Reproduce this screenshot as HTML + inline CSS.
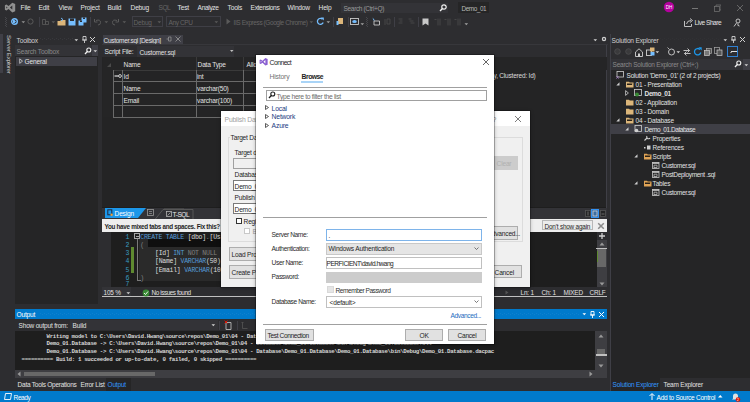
<!DOCTYPE html>
<html><head><meta charset="utf-8">
<style>
*{margin:0;padding:0;box-sizing:border-box}
html,body{width:750px;height:402px;overflow:hidden;background:#2d2d30;font-family:"Liberation Sans",sans-serif;font-size:6px;color:#f1f1f1;position:relative}
.a{position:absolute;display:block}
.t{position:absolute;white-space:pre;line-height:1}
</style></head><body>
<div class="a" style="left:0px;top:0px;width:750px;height:402px;background:#2d2d30;"></div>
<svg class="a" style="left:0px;top:0px;" width="20" height="15" viewBox="0 0 20 15"><path d="M12.3 2.7L15.2 4V11.2L12.3 12.4L8.6 8.9L6.4 10.4L4.9 9.7V5.3L6.4 4.6L8.6 6.1Z M12.3 5.4L9.9 7.5L12.3 9.6Z M6.3 6.4V8.6L7.6 7.5Z" fill="#909090" fill-rule="evenodd"/></svg>
<div class="t" style="left:20.60px;top:5.00px;font-size:6.6px;color:#e2e2e2;letter-spacing:-0.2px;">File</div>
<div class="t" style="left:38.60px;top:5.00px;font-size:6.6px;color:#e2e2e2;letter-spacing:-0.2px;">Edit</div>
<div class="t" style="left:58.60px;top:5.00px;font-size:6.6px;color:#e2e2e2;letter-spacing:-0.2px;">View</div>
<div class="t" style="left:80.60px;top:5.00px;font-size:6.6px;color:#e2e2e2;letter-spacing:-0.2px;">Project</div>
<div class="t" style="left:107.60px;top:5.00px;font-size:6.6px;color:#e2e2e2;letter-spacing:-0.2px;">Build</div>
<div class="t" style="left:130.60px;top:5.00px;font-size:6.6px;color:#e2e2e2;letter-spacing:-0.2px;">Debug</div>
<div class="t" style="left:177.60px;top:5.00px;font-size:6.6px;color:#e2e2e2;letter-spacing:-0.2px;">Test</div>
<div class="t" style="left:197.60px;top:5.00px;font-size:6.6px;color:#e2e2e2;letter-spacing:-0.35px;">Analyze</div>
<div class="t" style="left:227.60px;top:5.00px;font-size:6.6px;color:#e2e2e2;letter-spacing:-0.2px;">Tools</div>
<div class="t" style="left:250.60px;top:5.00px;font-size:6.6px;color:#e2e2e2;letter-spacing:-0.35px;">Extensions</div>
<div class="t" style="left:287.60px;top:5.00px;font-size:6.6px;color:#e2e2e2;letter-spacing:-0.2px;">Window</div>
<div class="t" style="left:318.60px;top:5.00px;font-size:6.6px;color:#e2e2e2;letter-spacing:-0.2px;">Help</div>
<div class="t" style="left:158.60px;top:5.00px;font-size:6.6px;color:#656565;letter-spacing:-0.5px;">SQL</div>
<div class="a" style="left:341px;top:3px;width:107px;height:10px;background:#333337;"></div>
<div class="t" style="left:343.60px;top:6.00px;font-size:6.6px;color:#999999;letter-spacing:-0.4px;">Search (Ctrl+Q)</div>
<svg class="a" style="left:439px;top:4px;" width="8" height="8" viewBox="0 0 8 8"><circle cx="5" cy="3" r="2.2" fill="none" stroke="#f1f1f1" stroke-width="1.2"/><path d="M3.5 4.5 L1 7" stroke="#f1f1f1" stroke-width="1.4"/></svg>
<div class="a" style="left:458px;top:2px;width:31px;height:11px;background:#252526;"></div>
<div class="t" style="left:461.60px;top:6.00px;font-size:6.4px;color:#b8b8b8;letter-spacing:-0.45px;">Demo_01</div>
<svg class="a" style="left:663px;top:1px;" width="12" height="12" viewBox="0 0 12 12"><circle cx="6" cy="6" r="5.2" fill="#b4009e"/><text x="6" y="7.9" font-size="4.6" text-anchor="middle" fill="#fff" font-family="Liberation Sans">DH</text></svg>
<div class="a" style="left:692px;top:8px;width:6px;height:1px;background:#767676;"></div>
<svg class="a" style="left:713px;top:4px;" width="8" height="8" viewBox="0 0 8 8"><rect x="1.5" y="2.5" width="5" height="5" fill="none" stroke="#767676" stroke-width="0.7"/><path d="M3 2.5V1h5v5H6.5" fill="none" stroke="#767676" stroke-width="0.7"/></svg>
<svg class="a" style="left:736px;top:4px;" width="8" height="8" viewBox="0 0 8 8"><path d="M1 1L7 7M7 1L1 7" stroke="#767676" stroke-width="0.8"/></svg>
<svg class="a" style="left:5px;top:17px;" width="3" height="10" viewBox="0 0 3 10"><rect x="0" y="0" width="1" height="1" fill="#46464a"/><rect x="1" y="1" width="1" height="1" fill="#46464a"/><rect x="0" y="2" width="1" height="1" fill="#46464a"/><rect x="1" y="3" width="1" height="1" fill="#46464a"/><rect x="0" y="4" width="1" height="1" fill="#46464a"/><rect x="1" y="5" width="1" height="1" fill="#46464a"/><rect x="0" y="6" width="1" height="1" fill="#46464a"/><rect x="1" y="7" width="1" height="1" fill="#46464a"/><rect x="0" y="8" width="1" height="1" fill="#46464a"/><rect x="1" y="9" width="1" height="1" fill="#46464a"/></svg>
<svg class="a" style="left:11px;top:18px;" width="7" height="7" viewBox="0 0 7 7"><circle cx="3.5" cy="3.5" r="2.8" fill="none" stroke="#75beff" stroke-width="1.4"/><path d="M2 2h1.5l1.5 1.5l-1.5 1.5H2Z" fill="#75beff"/></svg>
<svg class="a" style="left:21px;top:21px;" width="5" height="3" viewBox="0 0 5 3"><path d="M0.5 0.2h3.6l-1.8 2.1z" fill="#909090"/></svg>
<svg class="a" style="left:27px;top:18px;" width="7" height="7" viewBox="0 0 7 7"><circle cx="3.5" cy="3.5" r="2.6" fill="none" stroke="#5a5a5a" stroke-width="1"/></svg>
<div class="a" style="left:39px;top:17px;width:1px;height:10px;background:#3f3f46;"></div>
<svg class="a" style="left:42px;top:18px;" width="7" height="7" viewBox="0 0 7 7"><path d="M0.5 1.5h3v5h-3z M3.5 3.5h3v3h-3z" fill="none" stroke="#5a5a5a" stroke-width="0.8"/></svg>
<svg class="a" style="left:51px;top:21px;" width="5" height="3" viewBox="0 0 5 3"><path d="M0.5 0.2h3.6l-1.8 2.1z" fill="#5a5a5a"/></svg>
<svg class="a" style="left:57px;top:17px;" width="9" height="9" viewBox="0 0 9 9"><path d="M0.5 4h2.5l1-1h4.5v5.5h-8z" fill="#dcb67a"/><path d="M4 1l2 1.5l-2 1.5" fill="none" stroke="#75beff" stroke-width="0.9"/></svg>
<svg class="a" style="left:68px;top:18px;" width="8" height="8" viewBox="0 0 8 8"><path d="M0.5 0.5h7v7h-7z" fill="#75beff"/><rect x="2" y="0.5" width="4" height="2.5" fill="#2d2d30"/></svg>
<svg class="a" style="left:78px;top:17px;" width="9" height="9" viewBox="0 0 9 9"><path d="M3.5 0.5h5v5h-5z" fill="#75beff"/><rect x="5" y="0.5" width="2" height="1.5" fill="#2d2d30"/><path d="M0.5 3.5h5v5h-5z" fill="#75beff"/><rect x="2" y="3.5" width="2" height="1.5" fill="#2d2d30"/></svg>
<div class="a" style="left:90px;top:17px;width:1px;height:10px;background:#3f3f46;"></div>
<svg class="a" style="left:94px;top:18px;" width="8" height="8" viewBox="0 0 8 8"><path d="M2 2.5 Q6.5 1 6.5 4.5 Q6.5 7 4 7" fill="none" stroke="#5a5a5a" stroke-width="1"/><path d="M0.5 1v3h3" fill="none" stroke="#5a5a5a" stroke-width="1"/></svg>
<svg class="a" style="left:104px;top:21px;" width="5" height="3" viewBox="0 0 5 3"><path d="M0.5 0.2h3.6l-1.8 2.1z" fill="#5a5a5a"/></svg>
<svg class="a" style="left:111px;top:18px;" width="8" height="8" viewBox="0 0 8 8"><path d="M6 2.5 Q1.5 1 1.5 4.5 Q1.5 7 4 7" fill="none" stroke="#5a5a5a" stroke-width="1"/><path d="M7.5 1v3h-3" fill="none" stroke="#5a5a5a" stroke-width="1"/></svg>
<svg class="a" style="left:122px;top:21px;" width="5" height="3" viewBox="0 0 5 3"><path d="M0.5 0.2h3.6l-1.8 2.1z" fill="#5a5a5a"/></svg>
<div class="a" style="left:132px;top:16px;width:31px;height:11px;border:1px solid #3f3f46;background:transparent;"></div>
<div class="t" style="left:133.60px;top:20.00px;font-size:6.5px;color:#656565;letter-spacing:-0.2px;">Debug</div>
<svg class="a" style="left:157px;top:21px;" width="5" height="3" viewBox="0 0 5 3"><path d="M0.5 0.2h3.6l-1.8 2.1z" fill="#5a5a5a"/></svg>
<div class="a" style="left:166px;top:16px;width:55px;height:11px;border:1px solid #3f3f46;background:transparent;"></div>
<div class="t" style="left:168.60px;top:20.00px;font-size:6.5px;color:#656565;letter-spacing:-0.4px;">Any CPU</div>
<svg class="a" style="left:214px;top:21px;" width="5" height="3" viewBox="0 0 5 3"><path d="M0.5 0.2h3.6l-1.8 2.1z" fill="#5a5a5a"/></svg>
<svg class="a" style="left:226px;top:18px;" width="5" height="7" viewBox="0 0 5 7"><path d="M0.5 0.5L4.5 3.5L0.5 6.5Z" fill="#5a5a5a"/></svg>
<div class="t" style="left:233.60px;top:20.00px;font-size:6.5px;color:#656565;letter-spacing:-0.42px;">IIS Express (Google Chrome)</div>
<svg class="a" style="left:309px;top:21px;" width="5" height="3" viewBox="0 0 5 3"><path d="M0.5 0.2h3.6l-1.8 2.1z" fill="#5a5a5a"/></svg>
<svg class="a" style="left:316px;top:17px;" width="9" height="9" viewBox="0 0 9 9"><path d="M6.5 2.2 A3 3 0 1 0 7.2 5.5" fill="none" stroke="#75beff" stroke-width="1.3"/><path d="M4.8 0.5h3v3z" fill="#75beff"/></svg>
<svg class="a" style="left:326px;top:21px;" width="5" height="3" viewBox="0 0 5 3"><path d="M0.5 0.2h3.6l-1.8 2.1z" fill="#a0a0a0"/></svg>
<div class="a" style="left:333px;top:17px;width:1px;height:10px;background:#3f3f46;"></div>
<svg class="a" style="left:336px;top:17px;" width="9" height="9" viewBox="0 0 9 9"><path d="M2 1h5v6h-5z" fill="#dcb67a"/><path d="M0.5 4h2v4h-2z" fill="#75beff"/></svg>
<div class="a" style="left:348px;top:17px;width:1px;height:10px;background:#3f3f46;"></div>
<svg class="a" style="left:350px;top:18px;" width="9" height="8" viewBox="0 0 9 8"><rect x="0.5" y="0.5" width="8" height="6" fill="none" stroke="#c8c8c8" stroke-width="0.9"/><ellipse cx="4.5" cy="3.5" rx="2.3" ry="1.5" fill="#75beff"/></svg>
<svg class="a" style="left:360px;top:23px;" width="5" height="3" viewBox="0 0 5 3"><path d="M0.5 0.2h3.6l-1.8 2.1z" fill="#a0a0a0"/></svg>
<svg class="a" style="left:366px;top:17px;" width="3" height="10" viewBox="0 0 3 10"><rect x="0" y="0" width="1" height="1" fill="#46464a"/><rect x="1" y="1" width="1" height="1" fill="#46464a"/><rect x="0" y="2" width="1" height="1" fill="#46464a"/><rect x="1" y="3" width="1" height="1" fill="#46464a"/><rect x="0" y="4" width="1" height="1" fill="#46464a"/><rect x="1" y="5" width="1" height="1" fill="#46464a"/><rect x="0" y="6" width="1" height="1" fill="#46464a"/><rect x="1" y="7" width="1" height="1" fill="#46464a"/><rect x="0" y="8" width="1" height="1" fill="#46464a"/><rect x="1" y="9" width="1" height="1" fill="#46464a"/></svg>
<svg class="a" style="left:372px;top:17px;" width="8" height="9" viewBox="0 0 8 9"><path d="M0.5 0.5L3 3.5L1.5 3.5Z" fill="#75beff"/><path d="M2 4h5.5v4h-5.5z" fill="none" stroke="#c8c8c8" stroke-width="0.9"/></svg>
<svg class="a" style="left:384px;top:18px;" width="7" height="8" viewBox="0 0 7 8"><path d="M1 1v6M3 1h3v5h-3z" fill="none" stroke="#4a4a4a" stroke-width="0.9"/></svg>
<div class="a" style="left:394px;top:17px;width:1px;height:10px;background:#3f3f46;"></div>
<svg class="a" style="left:398px;top:18px;" width="6" height="7" viewBox="0 0 6 7"><path d="M0.5 1h4M1.5 3h3M0.5 5h4" stroke="#4a4a4a" stroke-width="0.9"/></svg>
<svg class="a" style="left:408px;top:18px;" width="7" height="7" viewBox="0 0 7 7"><path d="M0.5 1h3M1.5 3h4M2.5 5h4" stroke="#4a4a4a" stroke-width="0.9"/></svg>
<div class="a" style="left:418px;top:17px;width:1px;height:10px;background:#3f3f46;"></div>
<svg class="a" style="left:422px;top:18px;" width="7" height="8" viewBox="0 0 7 8"><path d="M0.5 0.5h6v7l-3-2l-3 2z" fill="#c8c8c8"/></svg>
<svg class="a" style="left:434px;top:18px;" width="7" height="8" viewBox="0 0 7 8"><path d="M0.5 1.5h2M4 0.5v7M6 0.5v7" stroke="#4a4a4a" stroke-width="0.9"/></svg>
<svg class="a" style="left:444px;top:18px;" width="7" height="8" viewBox="0 0 7 8"><path d="M0.5 1.5h2M4 0.5v7M6 0.5v7" stroke="#4a4a4a" stroke-width="0.9"/></svg>
<svg class="a" style="left:454px;top:18px;" width="7" height="8" viewBox="0 0 7 8"><path d="M0.5 1.5h2M4 0.5v7M6 0.5v7" stroke="#4a4a4a" stroke-width="0.9"/></svg>
<svg class="a" style="left:456px;top:18px;" width="7" height="8" viewBox="0 0 7 8"></svg>
<svg class="a" style="left:464px;top:23px;" width="5" height="3" viewBox="0 0 5 3"><path d="M0.5 0.2h3.6l-1.8 2.1z" fill="#a0a0a0"/></svg>
<svg class="a" style="left:684px;top:18px;" width="9" height="9" viewBox="0 0 9 9"><path d="M0.5 3v5.5h7V6" fill="none" stroke="#d0d0d0" stroke-width="0.9"/><path d="M2.5 6 Q3 2.5 7 2.5" fill="none" stroke="#d0d0d0" stroke-width="0.9"/><path d="M6 0.5L8.5 2.5L6 4.5" fill="none" stroke="#d0d0d0" stroke-width="0.9"/></svg>
<div class="t" style="left:694.60px;top:20.00px;font-size:6.6px;color:#e2e2e2;letter-spacing:-0.5px;">Live Share</div>
<svg class="a" style="left:733px;top:18px;" width="9" height="9" viewBox="0 0 9 9"><circle cx="5" cy="3" r="2" fill="none" stroke="#d0d0d0" stroke-width="0.9"/><path d="M1 8.5L3.5 5M5 5.5 Q4 8 6.5 8" fill="none" stroke="#d0d0d0" stroke-width="0.9"/></svg>
<div class="a" style="left:0px;top:34px;width:3px;height:39px;background:#3f3f46;"></div>
<div class="t" style="left:5.5px;top:35px;font-size:6.2px;color:#d0d0d0;writing-mode:vertical-rl;letter-spacing:-0.3px;line-height:7px">Server Explorer</div>
<div class="a" style="left:15px;top:34px;width:83px;height:270px;background:#252526;"></div>
<div class="a" style="left:15px;top:34px;width:83px;height:11px;background:#2d2d30;"></div>
<div class="t" style="left:16.60px;top:38.00px;font-size:6.6px;color:#d0d0d0;letter-spacing:-0.2px;">Toolbox</div>
<svg class="a" style="left:40px;top:38px;" width="33" height="3" viewBox="0 0 33 3"><rect x="0" y="0" width="1" height="1" fill="#38383c"/><rect x="2" y="1" width="1" height="1" fill="#38383c"/><rect x="4" y="0" width="1" height="1" fill="#38383c"/><rect x="6" y="1" width="1" height="1" fill="#38383c"/><rect x="8" y="0" width="1" height="1" fill="#38383c"/><rect x="10" y="1" width="1" height="1" fill="#38383c"/><rect x="12" y="0" width="1" height="1" fill="#38383c"/><rect x="14" y="1" width="1" height="1" fill="#38383c"/><rect x="16" y="0" width="1" height="1" fill="#38383c"/><rect x="18" y="1" width="1" height="1" fill="#38383c"/><rect x="20" y="0" width="1" height="1" fill="#38383c"/><rect x="22" y="1" width="1" height="1" fill="#38383c"/><rect x="24" y="0" width="1" height="1" fill="#38383c"/><rect x="26" y="1" width="1" height="1" fill="#38383c"/><rect x="28" y="0" width="1" height="1" fill="#38383c"/><rect x="30" y="1" width="1" height="1" fill="#38383c"/><rect x="32" y="0" width="1" height="1" fill="#38383c"/></svg>
<svg class="a" style="left:74px;top:39px;" width="5" height="3" viewBox="0 0 5 3"><path d="M0.5 0.2h3.6l-1.8 2.1z" fill="#d0d0d0"/></svg>
<svg class="a" style="left:82px;top:36px;" width="5" height="7" viewBox="0 0 5 7"><path d="M1 0.5h3v3.5h-3z M0 4h5 M2.5 4v3" fill="none" stroke="#d0d0d0" stroke-width="0.9"/></svg>
<svg class="a" style="left:89px;top:36px;" width="7" height="7" viewBox="0 0 7 7"><path d="M1 1L6 6M6 1L1 6" stroke="#d0d0d0" stroke-width="1"/></svg>
<div class="a" style="left:15px;top:45px;width:83px;height:11px;background:#333337;"></div>
<div class="t" style="left:16.60px;top:49.00px;font-size:6.6px;color:#8a8a8a;letter-spacing:-0.2px;">Search Toolbox</div>
<svg class="a" style="left:84px;top:47px;" width="8" height="8" viewBox="0 0 8 8"><circle cx="4.8" cy="3" r="2" fill="none" stroke="#f1f1f1" stroke-width="1.1"/><path d="M3.4 4.4 L1 7" stroke="#f1f1f1" stroke-width="1.4"/></svg>
<div class="a" style="left:92px;top:45px;width:6px;height:11px;background:#3f3f46;"></div>
<svg class="a" style="left:93px;top:50px;" width="5" height="3" viewBox="0 0 5 3"><path d="M0.5 0.2h3.6l-1.8 2.1z" fill="#d0d0d0"/></svg>
<div class="a" style="left:16px;top:57px;width:81px;height:9px;background:#3f3f46;"></div>
<svg class="a" style="left:19px;top:58px;" width="5" height="7" viewBox="0 0 5 7"><path d="M0.7 0.8L3.5 3.1L0.7 5.4Z" fill="none" stroke="#d0d0d0" stroke-width="0.8"/></svg>
<div class="t" style="left:24.60px;top:59.00px;font-size:6.6px;color:#e2e2e2;letter-spacing:-0.2px;">General</div>
<div class="a" style="left:102px;top:34px;width:505px;height:265px;background:#1e1e1e;"></div>
<div class="a" style="left:102px;top:34px;width:505px;height:10px;background:#2d2d30;"></div>
<div class="a" style="left:103px;top:35px;width:80px;height:9px;background:#3f3f46;"></div>
<div class="t" style="left:103.60px;top:38.00px;font-size:6.5px;color:#e2e2e2;letter-spacing:-0.3px;">Customer.sql [Design]</div>
<svg class="a" style="left:166px;top:36px;" width="6" height="6" viewBox="0 0 6 6"><path d="M0.5 3h2M2.5 1v4h2.5v-4z" fill="none" stroke="#999" stroke-width="0.7"/></svg>
<svg class="a" style="left:175px;top:36px;" width="6" height="6" viewBox="0 0 6 6"><path d="M0.5 0.5L5.5 5.5M5.5 0.5L0.5 5.5" stroke="#999" stroke-width="0.8"/></svg>
<svg class="a" style="left:593px;top:39px;" width="5" height="3" viewBox="0 0 5 3"><path d="M0.5 0.2h3.6l-1.8 2.1z" fill="#d0d0d0"/></svg>
<svg class="a" style="left:601px;top:36px;" width="6" height="6" viewBox="0 0 6 6"><circle cx="3" cy="3" r="2.2" fill="#d0d0d0"/><circle cx="3" cy="3" r="0.9" fill="#2d2d30"/></svg>
<div class="a" style="left:102px;top:44px;width:506px;height:1px;background:#37373b;"></div>
<div class="a" style="left:102px;top:45px;width:505px;height:12px;background:#2d2d30;"></div>
<div class="t" style="left:104.60px;top:49.00px;font-size:6.6px;color:#e2e2e2;letter-spacing:-0.2px;">Script File:</div>
<div class="a" style="left:137px;top:46px;width:97px;height:11px;background:#333337;"></div>
<div class="t" style="left:139.60px;top:50.00px;font-size:6.5px;color:#e2e2e2;letter-spacing:-0.2px;">Customer.sql</div>
<svg class="a" style="left:230px;top:50px;" width="4" height="3" viewBox="0 0 4 3"><path d="M0 0h3.5l-1.75 2z" fill="#c0c0c0"/></svg>
<div class="a" style="left:606px;top:45px;width:1px;height:254px;background:#3f3f46;"></div>
<div class="a" style="left:102px;top:57px;width:504px;height:150px;background:#242425;"></div>
<div class="a" style="left:103px;top:57px;width:504px;height:13px;background:#252526;"></div>
<div class="a" style="left:103px;top:57px;width:10px;height:60px;background:#252526;"></div>
<svg class="a" style="left:106px;top:62px;" width="6" height="6" viewBox="0 0 6 6"><path d="M5 1V5H1Z" fill="#4a4a4a"/></svg>
<div class="a" style="left:113px;top:70px;width:380px;height:1px;background:#3a3a3a;"></div>
<div class="a" style="left:113px;top:81px;width:380px;height:1px;background:#6a6a6a;"></div>
<div class="a" style="left:113px;top:93px;width:380px;height:1px;background:#6a6a6a;"></div>
<div class="a" style="left:113px;top:105px;width:380px;height:1px;background:#6a6a6a;"></div>
<div class="a" style="left:113px;top:117px;width:380px;height:1px;background:#6a6a6a;"></div>
<div class="a" style="left:122px;top:70px;width:1px;height:47px;background:#6a6a6a;"></div>
<div class="a" style="left:196px;top:70px;width:1px;height:47px;background:#6a6a6a;"></div>
<div class="a" style="left:243px;top:70px;width:1px;height:47px;background:#6a6a6a;"></div>
<div class="a" style="left:113px;top:70px;width:1px;height:48px;background:#6a6a6a;"></div>
<div class="a" style="left:196px;top:57px;width:1px;height:13px;background:#3a3a3a;"></div>
<div class="a" style="left:243px;top:57px;width:1px;height:13px;background:#3a3a3a;"></div>
<div class="t" style="left:123.60px;top:62.00px;font-size:6.6px;color:#e2e2e2;letter-spacing:-0.2px;">Name</div>
<div class="t" style="left:197.60px;top:62.00px;font-size:6.6px;color:#e2e2e2;letter-spacing:-0.2px;">Data Type</div>
<div class="t" style="left:246.60px;top:62.00px;font-size:6.6px;color:#e2e2e2;letter-spacing:-0.2px;">Allow Nulls</div>
<svg class="a" style="left:114px;top:74px;" width="8" height="4" viewBox="0 0 8 4"><path d="M0.5 2h4" stroke="#e0e0e0" stroke-width="1.2"/><circle cx="6" cy="2" r="1.4" fill="none" stroke="#e0e0e0" stroke-width="0.9"/></svg>
<div class="t" style="left:123.60px;top:74.00px;font-size:6.6px;color:#e2e2e2;letter-spacing:-0.2px;">Id</div>
<div class="t" style="left:197.10px;top:74.00px;font-size:6.6px;color:#e2e2e2;letter-spacing:-0.2px;">int</div>
<div class="t" style="left:123.60px;top:86.00px;font-size:6.6px;color:#e2e2e2;letter-spacing:-0.2px;">Name</div>
<div class="t" style="left:197.10px;top:86.00px;font-size:6.6px;color:#e2e2e2;letter-spacing:-0.2px;">varchar(50)</div>
<div class="t" style="left:123.60px;top:98.00px;font-size:6.6px;color:#e2e2e2;letter-spacing:-0.2px;">Email</div>
<div class="t" style="left:197.10px;top:98.00px;font-size:6.6px;color:#e2e2e2;letter-spacing:-0.2px;">varchar(100)</div>
<div class="t" style="left:493.60px;top:73.00px;font-size:6.5px;color:#dcdcdc;letter-spacing:-0.2px;">y, Clustered: Id)</div>
<div class="a" style="left:102px;top:208px;width:505px;height:11px;background:#333337;"></div>
<svg class="a" style="left:104px;top:207px;" width="80" height="12" viewBox="0 0 80 12"><path d="M1 1H42L34 11H1Z" fill="#1c97ea"/><path d="M52 12L60 2H90" fill="none" stroke="#555" stroke-width="1"/></svg>
<svg class="a" style="left:107px;top:209px;" width="7" height="8" viewBox="0 0 7 8"><rect x="0.8" y="0.8" width="4" height="5" fill="none" stroke="#1e2a40" stroke-width="1"/><circle cx="4.6" cy="5.8" r="1.2" fill="#e8a040"/></svg>
<div class="t" style="left:114.60px;top:211.00px;font-size:6.6px;color:#ffffff;letter-spacing:-0.2px;">Design</div>
<svg class="a" style="left:147px;top:209px;" width="7" height="7" viewBox="0 0 7 7"><rect x="0.5" y="0.5" width="6" height="6" fill="none" stroke="#999" stroke-width="0.8"/><path d="M2 2.5h3M5 4.5h-3" stroke="#999" stroke-width="0.7"/></svg>
<svg class="a" style="left:155px;top:208px;" width="40" height="12" viewBox="0 0 40 12"><path d="M0 11.5L8 1.5H38V11.5" fill="#333337" stroke="#5a5a5a" stroke-width="0.9"/></svg>
<svg class="a" style="left:166px;top:211px;" width="6" height="6" viewBox="0 0 6 6"><rect x="0.5" y="0.5" width="5" height="5" fill="none" stroke="#b0b0b0" stroke-width="0.8"/><path d="M1.5 4.5L4.5 1.5" stroke="#b0b0b0" stroke-width="0.7"/></svg>
<div class="t" style="left:172.60px;top:212.00px;font-size:6.6px;color:#e8e8e8;letter-spacing:-0.5px;">T-SQL</div>
<svg class="a" style="left:585px;top:210px;" width="6" height="7" viewBox="0 0 6 7"><rect x="0.5" y="0.5" width="5" height="6" fill="#252526" stroke="#555" stroke-width="0.8"/><path d="M3 1.5v4" stroke="#999" stroke-width="0.6"/></svg>
<svg class="a" style="left:591px;top:209px;" width="8" height="9" viewBox="0 0 8 9"><rect x="0.5" y="0.5" width="7" height="8" fill="#3e6ea0" stroke="#3399ff" stroke-width="0.9"/><rect x="2" y="2" width="4" height="5" fill="none" stroke="#ddd" stroke-width="0.7"/></svg>
<svg class="a" style="left:600px;top:210px;" width="6" height="7" viewBox="0 0 6 7"><rect x="0.5" y="0.5" width="5" height="6" fill="#252526" stroke="#555" stroke-width="0.8"/><path d="M1.5 4h3" stroke="#999" stroke-width="0.6"/></svg>
<div class="a" style="left:102px;top:219px;width:505px;height:13px;background:#eeeeee;"></div>
<div class="t" style="left:104.60px;top:224.00px;font-size:6.3px;color:#1e1e1e;letter-spacing:-0.3px;font-weight:bold;">You have mixed tabs and spaces. Fix this?</div>
<div class="a" style="left:542px;top:220px;width:51px;height:10px;border:1px solid #b8b8b8;background:#ececec;"></div>
<div class="t" style="left:544.60px;top:224.00px;font-size:6.4px;color:#1e1e1e;letter-spacing:-0.2px;">Don't show again</div>
<svg class="a" style="left:597px;top:222px;" width="8" height="8" viewBox="0 0 8 8"><path d="M1.2 1.2L6.8 6.8M6.8 1.2L1.2 6.8" stroke="#8a8a8a" stroke-width="1.5"/></svg>
<div class="a" style="left:139px;top:239px;width:82px;height:42px;background:#2a2a2a;"></div>
<div class="a" style="left:148px;top:239px;width:73px;height:8px;background:#0f0f0f;"></div>
<div class="t" style="left:125.60px;top:235.00px;font-size:6.5px;color:#3a9cc0;letter-spacing:-0.26px;font-family:'Liberation Mono',monospace;">1</div>
<div class="t" style="left:125.60px;top:243.00px;font-size:6.5px;color:#3a9cc0;letter-spacing:-0.26px;font-family:'Liberation Mono',monospace;">2</div>
<div class="t" style="left:125.60px;top:251.00px;font-size:6.5px;color:#3a9cc0;letter-spacing:-0.26px;font-family:'Liberation Mono',monospace;">3</div>
<div class="t" style="left:125.60px;top:259.00px;font-size:6.5px;color:#3a9cc0;letter-spacing:-0.26px;font-family:'Liberation Mono',monospace;">4</div>
<div class="t" style="left:125.60px;top:268.00px;font-size:6.5px;color:#3a9cc0;letter-spacing:-0.26px;font-family:'Liberation Mono',monospace;">5</div>
<div class="t" style="left:125.60px;top:276.00px;font-size:6.5px;color:#3a9cc0;letter-spacing:-0.26px;font-family:'Liberation Mono',monospace;">6</div>
<div class="t" style="left:125.60px;top:282.00px;font-size:6.5px;color:#3a9cc0;letter-spacing:-0.26px;font-family:'Liberation Mono',monospace;">7</div>
<div class="a" style="left:131px;top:247px;width:2.5px;height:26px;background:#5f8a30;"></div>
<div class="a" style="left:134px;top:233px;width:6px;height:6px;border:1px solid #a5a5a5;background:#1e1e1e;"></div>
<div class="a" style="left:135.5px;top:235.5px;width:3px;height:1px;background:#a5a5a5;"></div>
<div class="a" style="left:136.5px;top:239px;width:1px;height:41px;background:#7a7a7a;"></div>
<div class="a" style="left:136.5px;top:280px;width:4px;height:1px;background:#7a7a7a;"></div>
<div class="t" style="left:140.3px;top:235px;font-size:6.5px;font-family:'Liberation Mono',monospace;letter-spacing:-0.26px"><span style="color:#569cd6">CREATE TABLE </span><span style="color:#dcdcdc">[dbo]</span><span style="color:#808080">.</span><span style="color:#dcdcdc">[Us</span></div>
<div class="t" style="left:140.3px;top:243px;font-size:6.5px;font-family:'Liberation Mono',monospace;letter-spacing:-0.26px"><span style="color:#808080">(</span></div>
<div class="t" style="left:155px;top:251px;font-size:6.5px;font-family:'Liberation Mono',monospace;letter-spacing:-0.26px"><span style="color:#dcdcdc">[Id] </span><span style="color:#569cd6">INT </span><span style="color:#808080">NOT NULL</span></div>
<div class="t" style="left:155px;top:259px;font-size:6.5px;font-family:'Liberation Mono',monospace;letter-spacing:-0.26px"><span style="color:#dcdcdc">[Name] </span><span style="color:#569cd6">VARCHAR</span><span style="color:#dcdcdc">(50)</span></div>
<div class="t" style="left:155px;top:268px;font-size:6.5px;font-family:'Liberation Mono',monospace;letter-spacing:-0.26px"><span style="color:#dcdcdc">[Email] </span><span style="color:#569cd6">VARCHAR</span><span style="color:#dcdcdc">(10</span></div>
<div class="t" style="left:140.3px;top:276px;font-size:6.5px;font-family:'Liberation Mono',monospace;letter-spacing:-0.26px"><span style="color:#808080">)</span></div>
<div class="a" style="left:597px;top:232px;width:10px;height:56px;background:#3e3e42;"></div>
<div class="a" style="left:597px;top:232px;width:10px;height:8px;background:#2d2d30;"></div>
<svg class="a" style="left:598px;top:233px;" width="8" height="6" viewBox="0 0 8 6"><path d="M4 0v6M1 3h6" stroke="#d0d0d0" stroke-width="1.3"/></svg>
<svg class="a" style="left:599px;top:242px;" width="6" height="4" viewBox="0 0 6 4"><path d="M0.5 3.5L3 0.5L5.5 3.5Z" fill="#999"/></svg>
<div class="a" style="left:597px;top:249px;width:9px;height:18px;background:#686868;"></div>
<div class="a" style="left:596px;top:247.5px;width:11px;height:1.5px;background:#c0c0c0;"></div>
<div class="a" style="left:102px;top:232px;width:9px;height:55px;background:#2d2d30;"></div>
<div class="a" style="left:597px;top:251px;width:1px;height:11px;background:#5f8a30;"></div>
<svg class="a" style="left:599px;top:282px;" width="6" height="4" viewBox="0 0 6 4"><path d="M0.5 0.5L3 3.5L5.5 0.5Z" fill="#999"/></svg>
<div class="a" style="left:102px;top:287px;width:505px;height:12px;background:#2d2d30;"></div>
<div class="a" style="left:102px;top:287px;width:29px;height:9px;background:#333337;"></div>
<div class="a" style="left:102px;top:296px;width:505px;height:1px;background:#c0c0c0;"></div>
<div class="t" style="left:103.60px;top:290.00px;font-size:6.4px;color:#e2e2e2;letter-spacing:-0.2px;">105 %</div>
<svg class="a" style="left:126px;top:292px;" width="5" height="3" viewBox="0 0 5 3"><path d="M0.5 0.2h3.6l-1.8 2.1z" fill="#d0d0d0"/></svg>
<svg class="a" style="left:142px;top:289px;" width="8" height="8" viewBox="0 0 8 8"><circle cx="4" cy="4" r="3.4" fill="#388a34"/><path d="M2 4L3.5 5.5L6 2.5" fill="none" stroke="#fff" stroke-width="0.9"/></svg>
<div class="t" style="left:151.60px;top:290.00px;font-size:6.4px;color:#e2e2e2;letter-spacing:-0.45px;">No issues found</div>
<svg class="a" style="left:505px;top:290px;" width="4" height="5" viewBox="0 0 4 5"><path d="M0.5 0.5L3.5 2.5L0.5 4.5Z" fill="#555"/></svg>
<div class="t" style="left:520.60px;top:290.00px;font-size:6.4px;color:#e2e2e2;letter-spacing:-0.2px;">Ln: 1</div>
<div class="t" style="left:541.60px;top:290.00px;font-size:6.4px;color:#e2e2e2;letter-spacing:-0.2px;">Ch: 1</div>
<div class="t" style="left:563.60px;top:290.00px;font-size:6.4px;color:#e2e2e2;letter-spacing:-0.2px;">MIXED</div>
<div class="t" style="left:589.60px;top:290.00px;font-size:6.4px;color:#e2e2e2;letter-spacing:-0.2px;">CRLF</div>
<div class="a" style="left:610px;top:34px;width:1px;height:357px;background:#3f3f46;"></div>
<div class="a" style="left:611px;top:34px;width:139px;height:357px;background:#252526;"></div>
<div class="a" style="left:611px;top:34px;width:139px;height:11px;background:#2d2d30;"></div>
<div class="t" style="left:611.60px;top:38.00px;font-size:6.6px;color:#d0d0d0;letter-spacing:-0.2px;">Solution Explorer</div>
<svg class="a" style="left:660px;top:38px;" width="62" height="3" viewBox="0 0 62 3"><rect x="0" y="0" width="1" height="1" fill="#313134"/><rect x="2" y="1" width="1" height="1" fill="#313134"/><rect x="4" y="0" width="1" height="1" fill="#313134"/><rect x="6" y="1" width="1" height="1" fill="#313134"/><rect x="8" y="0" width="1" height="1" fill="#313134"/><rect x="10" y="1" width="1" height="1" fill="#313134"/><rect x="12" y="0" width="1" height="1" fill="#313134"/><rect x="14" y="1" width="1" height="1" fill="#313134"/><rect x="16" y="0" width="1" height="1" fill="#313134"/><rect x="18" y="1" width="1" height="1" fill="#313134"/><rect x="20" y="0" width="1" height="1" fill="#313134"/><rect x="22" y="1" width="1" height="1" fill="#313134"/><rect x="24" y="0" width="1" height="1" fill="#313134"/><rect x="26" y="1" width="1" height="1" fill="#313134"/><rect x="28" y="0" width="1" height="1" fill="#313134"/><rect x="30" y="1" width="1" height="1" fill="#313134"/><rect x="32" y="0" width="1" height="1" fill="#313134"/><rect x="34" y="1" width="1" height="1" fill="#313134"/><rect x="36" y="0" width="1" height="1" fill="#313134"/><rect x="38" y="1" width="1" height="1" fill="#313134"/><rect x="40" y="0" width="1" height="1" fill="#313134"/><rect x="42" y="1" width="1" height="1" fill="#313134"/><rect x="44" y="0" width="1" height="1" fill="#313134"/><rect x="46" y="1" width="1" height="1" fill="#313134"/><rect x="48" y="0" width="1" height="1" fill="#313134"/><rect x="50" y="1" width="1" height="1" fill="#313134"/><rect x="52" y="0" width="1" height="1" fill="#313134"/><rect x="54" y="1" width="1" height="1" fill="#313134"/><rect x="56" y="0" width="1" height="1" fill="#313134"/><rect x="58" y="1" width="1" height="1" fill="#313134"/><rect x="60" y="0" width="1" height="1" fill="#313134"/></svg>
<svg class="a" style="left:723px;top:39px;" width="5" height="3" viewBox="0 0 5 3"><path d="M0.5 0.2h3.6l-1.8 2.1z" fill="#d0d0d0"/></svg>
<svg class="a" style="left:731px;top:36px;" width="5" height="7" viewBox="0 0 5 7"><path d="M1 0.5h3v3.5h-3z M0 4h5 M2.5 4v3" fill="none" stroke="#d0d0d0" stroke-width="0.9"/></svg>
<svg class="a" style="left:739px;top:36px;" width="7" height="7" viewBox="0 0 7 7"><path d="M1 1L6 6M6 1L1 6" stroke="#d0d0d0" stroke-width="1"/></svg>
<div class="a" style="left:611px;top:45px;width:139px;height:14px;background:#2d2d30;"></div>
<svg class="a" style="left:614px;top:48px;" width="7" height="7" viewBox="0 0 7 7"><circle cx="3.5" cy="3.5" r="2.8" fill="#3a3a3c" stroke="#505052" stroke-width="0.8"/></svg>
<svg class="a" style="left:625px;top:48px;" width="7" height="7" viewBox="0 0 7 7"><circle cx="3.5" cy="3.5" r="2.8" fill="#3a3a3c" stroke="#505052" stroke-width="0.8"/></svg>
<svg class="a" style="left:635px;top:48px;" width="8" height="9" viewBox="0 0 8 9"><path d="M0.5 4L4 0.8L7.5 4V8.5H0.5Z" fill="none" stroke="#d0d0d0" stroke-width="0.9"/><rect x="3" y="5.5" width="2" height="3" fill="#d0d0d0"/></svg>
<svg class="a" style="left:646px;top:47px;" width="9" height="9" viewBox="0 0 9 9"><rect x="0.5" y="3" width="5" height="5.5" fill="none" stroke="#d0d0d0" stroke-width="0.9"/><rect x="4" y="0.5" width="4.5" height="4" fill="#dcb67a"/><rect x="4.5" y="5" width="4" height="3.5" fill="#75beff"/></svg>
<svg class="a" style="left:655px;top:51px;" width="5" height="3" viewBox="0 0 5 3"><path d="M0.5 0.2h3.6l-1.8 2.1z" fill="#d0d0d0"/></svg>
<svg class="a" style="left:667px;top:47px;" width="9" height="9" viewBox="0 0 9 9"><circle cx="4.5" cy="5" r="3" fill="none" stroke="#d0d0d0" stroke-width="0.9"/><path d="M0.5 0.5L2 2" stroke="#d0d0d0" stroke-width="0.8"/></svg>
<svg class="a" style="left:676px;top:51px;" width="5" height="3" viewBox="0 0 5 3"><path d="M0.5 0.2h3.6l-1.8 2.1z" fill="#d0d0d0"/></svg>
<svg class="a" style="left:683px;top:48px;" width="8" height="8" viewBox="0 0 8 8"><path d="M0.5 2.5h6M4.5 0.5L6.5 2.5L4.5 4.5M7.5 5.5h-6M3.5 3.5L1.5 5.5L3.5 7.5" fill="none" stroke="#d0d0d0" stroke-width="0.9"/></svg>
<svg class="a" style="left:693px;top:47px;" width="9" height="9" viewBox="0 0 9 9"><path d="M7 2.5 A3.2 3.2 0 1 0 7.8 5.5" fill="none" stroke="#1c97ea" stroke-width="1.3"/><path d="M5.5 0.3h3.2v3.2z" fill="#1c97ea"/></svg>
<svg class="a" style="left:704px;top:48px;" width="8" height="8" viewBox="0 0 8 8"><rect x="2.5" y="0.5" width="5" height="5" fill="#555" stroke="#aaa" stroke-width="0.7"/><rect x="0.5" y="2.5" width="5" height="5" fill="#777" stroke="#ccc" stroke-width="0.7"/></svg>
<svg class="a" style="left:714px;top:47px;" width="9" height="9" viewBox="0 0 9 9"><rect x="0.5" y="0.5" width="5" height="6" fill="none" stroke="#aaa" stroke-width="0.7"/><rect x="3" y="3" width="5" height="5.5" fill="#555" stroke="#ccc" stroke-width="0.7"/></svg>
<div class="a" style="left:727px;top:46px;width:11px;height:11px;border:1px solid #2f7fd0;background:#2d2d30;"></div>
<div class="a" style="left:731px;top:51px;width:6px;height:1.2px;background:#e0e0e0;"></div>
<div class="a" style="left:730px;top:51.5px;width:1.5px;height:1px;background:#909090;"></div>
<div class="a" style="left:611px;top:59px;width:139px;height:11px;background:#333337;"></div>
<div class="t" style="left:612.60px;top:62.00px;font-size:6.5px;color:#8a8a8a;letter-spacing:-0.25px;">Search Solution Explorer (Ctrl+;)</div>
<svg class="a" style="left:734px;top:60px;" width="8" height="8" viewBox="0 0 8 8"><circle cx="4.8" cy="3" r="2" fill="none" stroke="#f1f1f1" stroke-width="1.1"/><path d="M3.4 4.4 L1 7" stroke="#f1f1f1" stroke-width="1.4"/></svg>
<div class="a" style="left:743px;top:59px;width:7px;height:11px;background:#3f3f46;"></div>
<svg class="a" style="left:744px;top:64px;" width="5" height="3" viewBox="0 0 5 3"><path d="M0.5 0.2h3.6l-1.8 2.1z" fill="#d0d0d0"/></svg>
<div class="a" style="left:611px;top:124px;width:139px;height:10px;background:#3f3f46;"></div>
<svg class="a" style="left:616px;top:71px;" width="8" height="8" viewBox="0 0 8 8"><rect x="1" y="0.5" width="6.5" height="5.5" fill="none" stroke="#d0d0d0" stroke-width="0.8"/><path d="M0.5 5.5L2.5 7.5M0.5 7.5L2.5 5.5" stroke="#a074c4" stroke-width="1"/></svg>
<div class="t" style="left:626.60px;top:73.00px;font-size:6.5px;color:#e2e2e2;letter-spacing:-0.25px;">Solution 'Demo_01' (2 of 2 projects)</div>
<svg class="a" style="left:615.5px;top:82px;" width="4" height="4" viewBox="0 0 4 4"><path d="M3.5 0.3V3.5H0.3Z" fill="#d0d0d0"/></svg>
<svg class="a" style="left:626px;top:81px;" width="8" height="7" viewBox="0 0 8 7"><path d="M0 0.8h3l0.8 0.8h3.7v5h-7.5z" fill="#dcb67a"/><path d="M1 2.4h5.5l-0.6 1.6h-4.9z" fill="#2a2218"/></svg>
<div class="t" style="left:635.60px;top:82.00px;font-size:6.5px;color:#e2e2e2;letter-spacing:-0.2px;">01 - Presentation</div>
<svg class="a" style="left:624.5px;top:90px;" width="4" height="6" viewBox="0 0 4 6"><path d="M0.6 0.6L3.4 3L0.6 5.4Z" fill="none" stroke="#d0d0d0" stroke-width="0.8"/></svg>
<svg class="a" style="left:634px;top:89px;" width="8" height="8" viewBox="0 0 8 8"><rect x="0.5" y="0.5" width="7" height="6" fill="none" stroke="#d0d0d0" stroke-width="0.8"/><circle cx="3" cy="5.5" r="2" fill="#388a34"/></svg>
<div class="t" style="left:644.60px;top:91.00px;font-size:6.5px;color:#e2e2e2;letter-spacing:-0.4px;font-weight:bold;">Demo_01</div>
<svg class="a" style="left:626px;top:99px;" width="8" height="7" viewBox="0 0 8 7"><path d="M0 0.8h3l0.8 0.8h3.7v5h-7.5z" fill="#dcb67a"/></svg>
<div class="t" style="left:635.60px;top:100.00px;font-size:6.5px;color:#e2e2e2;letter-spacing:-0.2px;">02 - Application</div>
<svg class="a" style="left:626px;top:108px;" width="8" height="7" viewBox="0 0 8 7"><path d="M0 0.8h3l0.8 0.8h3.7v5h-7.5z" fill="#dcb67a"/></svg>
<div class="t" style="left:635.60px;top:109.00px;font-size:6.5px;color:#e2e2e2;letter-spacing:-0.2px;">03 - Domain</div>
<svg class="a" style="left:615.5px;top:118px;" width="4" height="4" viewBox="0 0 4 4"><path d="M3.5 0.3V3.5H0.3Z" fill="#d0d0d0"/></svg>
<svg class="a" style="left:626px;top:117px;" width="8" height="7" viewBox="0 0 8 7"><path d="M0 0.8h3l0.8 0.8h3.7v5h-7.5z" fill="#dcb67a"/><path d="M1 2.4h5.5l-0.6 1.6h-4.9z" fill="#2a2218"/></svg>
<div class="t" style="left:635.60px;top:118.00px;font-size:6.5px;color:#e2e2e2;letter-spacing:-0.2px;">04 - Database</div>
<svg class="a" style="left:624.5px;top:127px;" width="4" height="4" viewBox="0 0 4 4"><path d="M3.5 0.3V3.5H0.3Z" fill="#d0d0d0"/></svg>
<svg class="a" style="left:634px;top:125px;" width="8" height="8" viewBox="0 0 8 8"><rect x="1" y="0.5" width="6.5" height="6" fill="none" stroke="#d0d0d0" stroke-width="0.8"/><circle cx="2.5" cy="5.5" r="1.8" fill="#d0d0d0"/></svg>
<div class="t" style="left:644.60px;top:127.00px;font-size:6.5px;color:#e2e2e2;letter-spacing:-0.45px;">Demo_01.Database</div>
<svg class="a" style="left:644px;top:135px;" width="7" height="6" viewBox="0 0 7 6"><path d="M0.5 5.5L3.5 2.5M3 1a1.8 1.8 0 1 0 3 2" fill="none" stroke="#d0d0d0" stroke-width="1.1"/></svg>
<div class="t" style="left:652.60px;top:136.00px;font-size:6.5px;color:#e2e2e2;letter-spacing:-0.2px;">Properties</div>
<svg class="a" style="left:644px;top:145px;" width="7" height="5" viewBox="0 0 7 5"><rect x="0" y="2" width="1.5" height="1.5" fill="#d0d0d0"/><rect x="3" y="0.5" width="3.5" height="4" fill="#d0d0d0"/></svg>
<div class="t" style="left:652.60px;top:145.00px;font-size:6.5px;color:#e2e2e2;letter-spacing:-0.2px;">References</div>
<svg class="a" style="left:633.5px;top:154px;" width="4" height="4" viewBox="0 0 4 4"><path d="M3.5 0.3V3.5H0.3Z" fill="#d0d0d0"/></svg>
<svg class="a" style="left:644px;top:153px;" width="8" height="7" viewBox="0 0 8 7"><path d="M0 0.8h3l0.8 0.8h3.7v5h-7.5z" fill="#e0a456"/><path d="M1 2.4h5.5l-0.6 1.6h-4.9z" fill="#2a2218"/></svg>
<div class="t" style="left:652.60px;top:154.00px;font-size:6.5px;color:#e2e2e2;letter-spacing:-0.2px;">Scripts</div>
<svg class="a" style="left:652px;top:161.5px;" width="8" height="7" viewBox="0 0 8 7"><rect x="0.5" y="0.5" width="6.5" height="6" fill="none" stroke="#c8c8c8" stroke-width="0.8"/><rect x="0.5" y="0.5" width="6.5" height="1.3" fill="#c8c8c8"/><path d="M2 6.5V3.2h3v2.3h-3" fill="none" stroke="#c8c8c8" stroke-width="0.7"/></svg>
<div class="t" style="left:661.60px;top:163.00px;font-size:6.5px;color:#e2e2e2;letter-spacing:-0.35px;">Customer.sql</div>
<svg class="a" style="left:652px;top:170.5px;" width="8" height="7" viewBox="0 0 8 7"><rect x="0.5" y="0.5" width="6.5" height="6" fill="none" stroke="#c8c8c8" stroke-width="0.8"/><rect x="0.5" y="0.5" width="6.5" height="1.3" fill="#c8c8c8"/><path d="M2 6.5V3.2h3v2.3h-3" fill="none" stroke="#c8c8c8" stroke-width="0.7"/></svg>
<div class="t" style="left:661.60px;top:172.00px;font-size:6.5px;color:#e2e2e2;letter-spacing:-0.32px;">PostDeployment .sql</div>
<svg class="a" style="left:633.5px;top:181px;" width="4" height="4" viewBox="0 0 4 4"><path d="M3.5 0.3V3.5H0.3Z" fill="#d0d0d0"/></svg>
<svg class="a" style="left:644px;top:180px;" width="8" height="7" viewBox="0 0 8 7"><path d="M0 0.8h3l0.8 0.8h3.7v5h-7.5z" fill="#e0a456"/><path d="M1 2.4h5.5l-0.6 1.6h-4.9z" fill="#2a2218"/></svg>
<div class="t" style="left:652.60px;top:181.00px;font-size:6.5px;color:#e2e2e2;letter-spacing:-0.2px;">Tables</div>
<svg class="a" style="left:652px;top:188.5px;" width="8" height="7" viewBox="0 0 8 7"><rect x="0.5" y="0.5" width="6.5" height="6" fill="none" stroke="#c8c8c8" stroke-width="0.8"/><rect x="0.5" y="0.5" width="6.5" height="1.3" fill="#c8c8c8"/><path d="M2 6.5V3.2h3v2.3h-3" fill="none" stroke="#c8c8c8" stroke-width="0.7"/></svg>
<div class="t" style="left:661.60px;top:190.00px;font-size:6.5px;color:#e2e2e2;letter-spacing:-0.35px;">Customer.sql</div>
<div class="a" style="left:611px;top:378px;width:139px;height:13px;background:#2d2d30;"></div>
<div class="a" style="left:611px;top:378px;width:49px;height:13px;background:#252526;"></div>
<div class="t" style="left:612.60px;top:382.00px;font-size:6.5px;color:#3399ff;letter-spacing:-0.2px;">Solution Explorer</div>
<div class="t" style="left:663.60px;top:382.00px;font-size:6.5px;color:#e2e2e2;letter-spacing:-0.2px;">Team Explorer</div>
<div class="a" style="left:15px;top:309px;width:592px;height:10px;background:#007acc;"></div>
<div class="t" style="left:16.60px;top:312.00px;font-size:6.6px;color:#ffffff;letter-spacing:-0.2px;">Output</div>
<svg class="a" style="left:40px;top:313px;" width="540" height="3" viewBox="0 0 540 3"><rect x="0" y="0" width="1" height="1" fill="#0f80cf"/><rect x="2" y="1" width="1" height="1" fill="#0f80cf"/><rect x="4" y="0" width="1" height="1" fill="#0f80cf"/><rect x="6" y="1" width="1" height="1" fill="#0f80cf"/><rect x="8" y="0" width="1" height="1" fill="#0f80cf"/><rect x="10" y="1" width="1" height="1" fill="#0f80cf"/><rect x="12" y="0" width="1" height="1" fill="#0f80cf"/><rect x="14" y="1" width="1" height="1" fill="#0f80cf"/><rect x="16" y="0" width="1" height="1" fill="#0f80cf"/><rect x="18" y="1" width="1" height="1" fill="#0f80cf"/><rect x="20" y="0" width="1" height="1" fill="#0f80cf"/><rect x="22" y="1" width="1" height="1" fill="#0f80cf"/><rect x="24" y="0" width="1" height="1" fill="#0f80cf"/><rect x="26" y="1" width="1" height="1" fill="#0f80cf"/><rect x="28" y="0" width="1" height="1" fill="#0f80cf"/><rect x="30" y="1" width="1" height="1" fill="#0f80cf"/><rect x="32" y="0" width="1" height="1" fill="#0f80cf"/><rect x="34" y="1" width="1" height="1" fill="#0f80cf"/><rect x="36" y="0" width="1" height="1" fill="#0f80cf"/><rect x="38" y="1" width="1" height="1" fill="#0f80cf"/><rect x="40" y="0" width="1" height="1" fill="#0f80cf"/><rect x="42" y="1" width="1" height="1" fill="#0f80cf"/><rect x="44" y="0" width="1" height="1" fill="#0f80cf"/><rect x="46" y="1" width="1" height="1" fill="#0f80cf"/><rect x="48" y="0" width="1" height="1" fill="#0f80cf"/><rect x="50" y="1" width="1" height="1" fill="#0f80cf"/><rect x="52" y="0" width="1" height="1" fill="#0f80cf"/><rect x="54" y="1" width="1" height="1" fill="#0f80cf"/><rect x="56" y="0" width="1" height="1" fill="#0f80cf"/><rect x="58" y="1" width="1" height="1" fill="#0f80cf"/><rect x="60" y="0" width="1" height="1" fill="#0f80cf"/><rect x="62" y="1" width="1" height="1" fill="#0f80cf"/><rect x="64" y="0" width="1" height="1" fill="#0f80cf"/><rect x="66" y="1" width="1" height="1" fill="#0f80cf"/><rect x="68" y="0" width="1" height="1" fill="#0f80cf"/><rect x="70" y="1" width="1" height="1" fill="#0f80cf"/><rect x="72" y="0" width="1" height="1" fill="#0f80cf"/><rect x="74" y="1" width="1" height="1" fill="#0f80cf"/><rect x="76" y="0" width="1" height="1" fill="#0f80cf"/><rect x="78" y="1" width="1" height="1" fill="#0f80cf"/><rect x="80" y="0" width="1" height="1" fill="#0f80cf"/><rect x="82" y="1" width="1" height="1" fill="#0f80cf"/><rect x="84" y="0" width="1" height="1" fill="#0f80cf"/><rect x="86" y="1" width="1" height="1" fill="#0f80cf"/><rect x="88" y="0" width="1" height="1" fill="#0f80cf"/><rect x="90" y="1" width="1" height="1" fill="#0f80cf"/><rect x="92" y="0" width="1" height="1" fill="#0f80cf"/><rect x="94" y="1" width="1" height="1" fill="#0f80cf"/><rect x="96" y="0" width="1" height="1" fill="#0f80cf"/><rect x="98" y="1" width="1" height="1" fill="#0f80cf"/><rect x="100" y="0" width="1" height="1" fill="#0f80cf"/><rect x="102" y="1" width="1" height="1" fill="#0f80cf"/><rect x="104" y="0" width="1" height="1" fill="#0f80cf"/><rect x="106" y="1" width="1" height="1" fill="#0f80cf"/><rect x="108" y="0" width="1" height="1" fill="#0f80cf"/><rect x="110" y="1" width="1" height="1" fill="#0f80cf"/><rect x="112" y="0" width="1" height="1" fill="#0f80cf"/><rect x="114" y="1" width="1" height="1" fill="#0f80cf"/><rect x="116" y="0" width="1" height="1" fill="#0f80cf"/><rect x="118" y="1" width="1" height="1" fill="#0f80cf"/><rect x="120" y="0" width="1" height="1" fill="#0f80cf"/><rect x="122" y="1" width="1" height="1" fill="#0f80cf"/><rect x="124" y="0" width="1" height="1" fill="#0f80cf"/><rect x="126" y="1" width="1" height="1" fill="#0f80cf"/><rect x="128" y="0" width="1" height="1" fill="#0f80cf"/><rect x="130" y="1" width="1" height="1" fill="#0f80cf"/><rect x="132" y="0" width="1" height="1" fill="#0f80cf"/><rect x="134" y="1" width="1" height="1" fill="#0f80cf"/><rect x="136" y="0" width="1" height="1" fill="#0f80cf"/><rect x="138" y="1" width="1" height="1" fill="#0f80cf"/><rect x="140" y="0" width="1" height="1" fill="#0f80cf"/><rect x="142" y="1" width="1" height="1" fill="#0f80cf"/><rect x="144" y="0" width="1" height="1" fill="#0f80cf"/><rect x="146" y="1" width="1" height="1" fill="#0f80cf"/><rect x="148" y="0" width="1" height="1" fill="#0f80cf"/><rect x="150" y="1" width="1" height="1" fill="#0f80cf"/><rect x="152" y="0" width="1" height="1" fill="#0f80cf"/><rect x="154" y="1" width="1" height="1" fill="#0f80cf"/><rect x="156" y="0" width="1" height="1" fill="#0f80cf"/><rect x="158" y="1" width="1" height="1" fill="#0f80cf"/><rect x="160" y="0" width="1" height="1" fill="#0f80cf"/><rect x="162" y="1" width="1" height="1" fill="#0f80cf"/><rect x="164" y="0" width="1" height="1" fill="#0f80cf"/><rect x="166" y="1" width="1" height="1" fill="#0f80cf"/><rect x="168" y="0" width="1" height="1" fill="#0f80cf"/><rect x="170" y="1" width="1" height="1" fill="#0f80cf"/><rect x="172" y="0" width="1" height="1" fill="#0f80cf"/><rect x="174" y="1" width="1" height="1" fill="#0f80cf"/><rect x="176" y="0" width="1" height="1" fill="#0f80cf"/><rect x="178" y="1" width="1" height="1" fill="#0f80cf"/><rect x="180" y="0" width="1" height="1" fill="#0f80cf"/><rect x="182" y="1" width="1" height="1" fill="#0f80cf"/><rect x="184" y="0" width="1" height="1" fill="#0f80cf"/><rect x="186" y="1" width="1" height="1" fill="#0f80cf"/><rect x="188" y="0" width="1" height="1" fill="#0f80cf"/><rect x="190" y="1" width="1" height="1" fill="#0f80cf"/><rect x="192" y="0" width="1" height="1" fill="#0f80cf"/><rect x="194" y="1" width="1" height="1" fill="#0f80cf"/><rect x="196" y="0" width="1" height="1" fill="#0f80cf"/><rect x="198" y="1" width="1" height="1" fill="#0f80cf"/><rect x="200" y="0" width="1" height="1" fill="#0f80cf"/><rect x="202" y="1" width="1" height="1" fill="#0f80cf"/><rect x="204" y="0" width="1" height="1" fill="#0f80cf"/><rect x="206" y="1" width="1" height="1" fill="#0f80cf"/><rect x="208" y="0" width="1" height="1" fill="#0f80cf"/><rect x="210" y="1" width="1" height="1" fill="#0f80cf"/><rect x="212" y="0" width="1" height="1" fill="#0f80cf"/><rect x="214" y="1" width="1" height="1" fill="#0f80cf"/><rect x="216" y="0" width="1" height="1" fill="#0f80cf"/><rect x="218" y="1" width="1" height="1" fill="#0f80cf"/><rect x="220" y="0" width="1" height="1" fill="#0f80cf"/><rect x="222" y="1" width="1" height="1" fill="#0f80cf"/><rect x="224" y="0" width="1" height="1" fill="#0f80cf"/><rect x="226" y="1" width="1" height="1" fill="#0f80cf"/><rect x="228" y="0" width="1" height="1" fill="#0f80cf"/><rect x="230" y="1" width="1" height="1" fill="#0f80cf"/><rect x="232" y="0" width="1" height="1" fill="#0f80cf"/><rect x="234" y="1" width="1" height="1" fill="#0f80cf"/><rect x="236" y="0" width="1" height="1" fill="#0f80cf"/><rect x="238" y="1" width="1" height="1" fill="#0f80cf"/><rect x="240" y="0" width="1" height="1" fill="#0f80cf"/><rect x="242" y="1" width="1" height="1" fill="#0f80cf"/><rect x="244" y="0" width="1" height="1" fill="#0f80cf"/><rect x="246" y="1" width="1" height="1" fill="#0f80cf"/><rect x="248" y="0" width="1" height="1" fill="#0f80cf"/><rect x="250" y="1" width="1" height="1" fill="#0f80cf"/><rect x="252" y="0" width="1" height="1" fill="#0f80cf"/><rect x="254" y="1" width="1" height="1" fill="#0f80cf"/><rect x="256" y="0" width="1" height="1" fill="#0f80cf"/><rect x="258" y="1" width="1" height="1" fill="#0f80cf"/><rect x="260" y="0" width="1" height="1" fill="#0f80cf"/><rect x="262" y="1" width="1" height="1" fill="#0f80cf"/><rect x="264" y="0" width="1" height="1" fill="#0f80cf"/><rect x="266" y="1" width="1" height="1" fill="#0f80cf"/><rect x="268" y="0" width="1" height="1" fill="#0f80cf"/><rect x="270" y="1" width="1" height="1" fill="#0f80cf"/><rect x="272" y="0" width="1" height="1" fill="#0f80cf"/><rect x="274" y="1" width="1" height="1" fill="#0f80cf"/><rect x="276" y="0" width="1" height="1" fill="#0f80cf"/><rect x="278" y="1" width="1" height="1" fill="#0f80cf"/><rect x="280" y="0" width="1" height="1" fill="#0f80cf"/><rect x="282" y="1" width="1" height="1" fill="#0f80cf"/><rect x="284" y="0" width="1" height="1" fill="#0f80cf"/><rect x="286" y="1" width="1" height="1" fill="#0f80cf"/><rect x="288" y="0" width="1" height="1" fill="#0f80cf"/><rect x="290" y="1" width="1" height="1" fill="#0f80cf"/><rect x="292" y="0" width="1" height="1" fill="#0f80cf"/><rect x="294" y="1" width="1" height="1" fill="#0f80cf"/><rect x="296" y="0" width="1" height="1" fill="#0f80cf"/><rect x="298" y="1" width="1" height="1" fill="#0f80cf"/><rect x="300" y="0" width="1" height="1" fill="#0f80cf"/><rect x="302" y="1" width="1" height="1" fill="#0f80cf"/><rect x="304" y="0" width="1" height="1" fill="#0f80cf"/><rect x="306" y="1" width="1" height="1" fill="#0f80cf"/><rect x="308" y="0" width="1" height="1" fill="#0f80cf"/><rect x="310" y="1" width="1" height="1" fill="#0f80cf"/><rect x="312" y="0" width="1" height="1" fill="#0f80cf"/><rect x="314" y="1" width="1" height="1" fill="#0f80cf"/><rect x="316" y="0" width="1" height="1" fill="#0f80cf"/><rect x="318" y="1" width="1" height="1" fill="#0f80cf"/><rect x="320" y="0" width="1" height="1" fill="#0f80cf"/><rect x="322" y="1" width="1" height="1" fill="#0f80cf"/><rect x="324" y="0" width="1" height="1" fill="#0f80cf"/><rect x="326" y="1" width="1" height="1" fill="#0f80cf"/><rect x="328" y="0" width="1" height="1" fill="#0f80cf"/><rect x="330" y="1" width="1" height="1" fill="#0f80cf"/><rect x="332" y="0" width="1" height="1" fill="#0f80cf"/><rect x="334" y="1" width="1" height="1" fill="#0f80cf"/><rect x="336" y="0" width="1" height="1" fill="#0f80cf"/><rect x="338" y="1" width="1" height="1" fill="#0f80cf"/><rect x="340" y="0" width="1" height="1" fill="#0f80cf"/><rect x="342" y="1" width="1" height="1" fill="#0f80cf"/><rect x="344" y="0" width="1" height="1" fill="#0f80cf"/><rect x="346" y="1" width="1" height="1" fill="#0f80cf"/><rect x="348" y="0" width="1" height="1" fill="#0f80cf"/><rect x="350" y="1" width="1" height="1" fill="#0f80cf"/><rect x="352" y="0" width="1" height="1" fill="#0f80cf"/><rect x="354" y="1" width="1" height="1" fill="#0f80cf"/><rect x="356" y="0" width="1" height="1" fill="#0f80cf"/><rect x="358" y="1" width="1" height="1" fill="#0f80cf"/><rect x="360" y="0" width="1" height="1" fill="#0f80cf"/><rect x="362" y="1" width="1" height="1" fill="#0f80cf"/><rect x="364" y="0" width="1" height="1" fill="#0f80cf"/><rect x="366" y="1" width="1" height="1" fill="#0f80cf"/><rect x="368" y="0" width="1" height="1" fill="#0f80cf"/><rect x="370" y="1" width="1" height="1" fill="#0f80cf"/><rect x="372" y="0" width="1" height="1" fill="#0f80cf"/><rect x="374" y="1" width="1" height="1" fill="#0f80cf"/><rect x="376" y="0" width="1" height="1" fill="#0f80cf"/><rect x="378" y="1" width="1" height="1" fill="#0f80cf"/><rect x="380" y="0" width="1" height="1" fill="#0f80cf"/><rect x="382" y="1" width="1" height="1" fill="#0f80cf"/><rect x="384" y="0" width="1" height="1" fill="#0f80cf"/><rect x="386" y="1" width="1" height="1" fill="#0f80cf"/><rect x="388" y="0" width="1" height="1" fill="#0f80cf"/><rect x="390" y="1" width="1" height="1" fill="#0f80cf"/><rect x="392" y="0" width="1" height="1" fill="#0f80cf"/><rect x="394" y="1" width="1" height="1" fill="#0f80cf"/><rect x="396" y="0" width="1" height="1" fill="#0f80cf"/><rect x="398" y="1" width="1" height="1" fill="#0f80cf"/><rect x="400" y="0" width="1" height="1" fill="#0f80cf"/><rect x="402" y="1" width="1" height="1" fill="#0f80cf"/><rect x="404" y="0" width="1" height="1" fill="#0f80cf"/><rect x="406" y="1" width="1" height="1" fill="#0f80cf"/><rect x="408" y="0" width="1" height="1" fill="#0f80cf"/><rect x="410" y="1" width="1" height="1" fill="#0f80cf"/><rect x="412" y="0" width="1" height="1" fill="#0f80cf"/><rect x="414" y="1" width="1" height="1" fill="#0f80cf"/><rect x="416" y="0" width="1" height="1" fill="#0f80cf"/><rect x="418" y="1" width="1" height="1" fill="#0f80cf"/><rect x="420" y="0" width="1" height="1" fill="#0f80cf"/><rect x="422" y="1" width="1" height="1" fill="#0f80cf"/><rect x="424" y="0" width="1" height="1" fill="#0f80cf"/><rect x="426" y="1" width="1" height="1" fill="#0f80cf"/><rect x="428" y="0" width="1" height="1" fill="#0f80cf"/><rect x="430" y="1" width="1" height="1" fill="#0f80cf"/><rect x="432" y="0" width="1" height="1" fill="#0f80cf"/><rect x="434" y="1" width="1" height="1" fill="#0f80cf"/><rect x="436" y="0" width="1" height="1" fill="#0f80cf"/><rect x="438" y="1" width="1" height="1" fill="#0f80cf"/><rect x="440" y="0" width="1" height="1" fill="#0f80cf"/><rect x="442" y="1" width="1" height="1" fill="#0f80cf"/><rect x="444" y="0" width="1" height="1" fill="#0f80cf"/><rect x="446" y="1" width="1" height="1" fill="#0f80cf"/><rect x="448" y="0" width="1" height="1" fill="#0f80cf"/><rect x="450" y="1" width="1" height="1" fill="#0f80cf"/><rect x="452" y="0" width="1" height="1" fill="#0f80cf"/><rect x="454" y="1" width="1" height="1" fill="#0f80cf"/><rect x="456" y="0" width="1" height="1" fill="#0f80cf"/><rect x="458" y="1" width="1" height="1" fill="#0f80cf"/><rect x="460" y="0" width="1" height="1" fill="#0f80cf"/><rect x="462" y="1" width="1" height="1" fill="#0f80cf"/><rect x="464" y="0" width="1" height="1" fill="#0f80cf"/><rect x="466" y="1" width="1" height="1" fill="#0f80cf"/><rect x="468" y="0" width="1" height="1" fill="#0f80cf"/><rect x="470" y="1" width="1" height="1" fill="#0f80cf"/><rect x="472" y="0" width="1" height="1" fill="#0f80cf"/><rect x="474" y="1" width="1" height="1" fill="#0f80cf"/><rect x="476" y="0" width="1" height="1" fill="#0f80cf"/><rect x="478" y="1" width="1" height="1" fill="#0f80cf"/><rect x="480" y="0" width="1" height="1" fill="#0f80cf"/><rect x="482" y="1" width="1" height="1" fill="#0f80cf"/><rect x="484" y="0" width="1" height="1" fill="#0f80cf"/><rect x="486" y="1" width="1" height="1" fill="#0f80cf"/><rect x="488" y="0" width="1" height="1" fill="#0f80cf"/><rect x="490" y="1" width="1" height="1" fill="#0f80cf"/><rect x="492" y="0" width="1" height="1" fill="#0f80cf"/><rect x="494" y="1" width="1" height="1" fill="#0f80cf"/><rect x="496" y="0" width="1" height="1" fill="#0f80cf"/><rect x="498" y="1" width="1" height="1" fill="#0f80cf"/><rect x="500" y="0" width="1" height="1" fill="#0f80cf"/><rect x="502" y="1" width="1" height="1" fill="#0f80cf"/><rect x="504" y="0" width="1" height="1" fill="#0f80cf"/><rect x="506" y="1" width="1" height="1" fill="#0f80cf"/><rect x="508" y="0" width="1" height="1" fill="#0f80cf"/><rect x="510" y="1" width="1" height="1" fill="#0f80cf"/><rect x="512" y="0" width="1" height="1" fill="#0f80cf"/><rect x="514" y="1" width="1" height="1" fill="#0f80cf"/><rect x="516" y="0" width="1" height="1" fill="#0f80cf"/><rect x="518" y="1" width="1" height="1" fill="#0f80cf"/><rect x="520" y="0" width="1" height="1" fill="#0f80cf"/><rect x="522" y="1" width="1" height="1" fill="#0f80cf"/><rect x="524" y="0" width="1" height="1" fill="#0f80cf"/><rect x="526" y="1" width="1" height="1" fill="#0f80cf"/><rect x="528" y="0" width="1" height="1" fill="#0f80cf"/><rect x="530" y="1" width="1" height="1" fill="#0f80cf"/><rect x="532" y="0" width="1" height="1" fill="#0f80cf"/><rect x="534" y="1" width="1" height="1" fill="#0f80cf"/><rect x="536" y="0" width="1" height="1" fill="#0f80cf"/><rect x="538" y="1" width="1" height="1" fill="#0f80cf"/></svg>
<svg class="a" style="left:582px;top:313px;" width="5" height="3" viewBox="0 0 5 3"><path d="M0.5 0.2h3.6l-1.8 2.1z" fill="#ffffff"/></svg>
<svg class="a" style="left:590px;top:311px;" width="5" height="7" viewBox="0 0 5 7"><path d="M1 0.5h3v3.5h-3z M0 4h5 M2.5 4v3" fill="none" stroke="#fff" stroke-width="0.9"/></svg>
<svg class="a" style="left:598px;top:311px;" width="7" height="7" viewBox="0 0 7 7"><path d="M1 1L6 6M6 1L1 6" stroke="#fff" stroke-width="1"/></svg>
<div class="a" style="left:15px;top:319px;width:592px;height:12px;background:#2d2d30;"></div>
<div class="t" style="left:18.60px;top:323.00px;font-size:6.5px;color:#e2e2e2;letter-spacing:-0.2px;">Show output from:</div>
<div class="a" style="left:70px;top:320px;width:148px;height:10px;background:#333337;"></div>
<div class="t" style="left:72.60px;top:323.00px;font-size:6.5px;color:#e2e2e2;letter-spacing:-0.2px;">Build</div>
<svg class="a" style="left:211px;top:324px;" width="5" height="3" viewBox="0 0 5 3"><path d="M0.5 0.2h3.6l-1.8 2.1z" fill="#d0d0d0"/></svg>
<div class="a" style="left:219px;top:321px;width:1px;height:9px;background:#3f3f46;"></div>
<svg class="a" style="left:224px;top:320px;" width="9" height="10" viewBox="0 0 9 10"><path d="M2 2.5h5v7h-5z" fill="none" stroke="#c8c8c8" stroke-width="0.8"/><path d="M0.5 0.5L3.5 3.5M3.5 0.5L0.5 3.5" stroke="#e51400" stroke-width="0.9"/></svg>
<div class="a" style="left:237px;top:321px;width:1px;height:9px;background:#3f3f46;"></div>
<svg class="a" style="left:241px;top:321px;" width="7" height="8" viewBox="0 0 7 8"><path d="M0.5 1.5h2M1.5 1.5v6h5" fill="none" stroke="#555" stroke-width="0.8"/></svg>
<div class="a" style="left:15px;top:331px;width:580px;height:39px;background:#1e1e1e;"></div>
<div class="t" style="left:46.60px;top:334.00px;font-size:5.8px;color:#d4d4d4;letter-spacing:-0.35px;font-weight:bold;font-family:'Liberation Mono',monospace;">Writing model to C:\Users\David.Hwang\source\repos\Demo_01\04 - Database\Demo_01.Database\obj\Debug\Model.xml...</div>
<div class="t" style="left:46.60px;top:341.00px;font-size:5.8px;color:#d4d4d4;letter-spacing:-0.35px;font-weight:bold;font-family:'Liberation Mono',monospace;">Demo_01.Database -&gt; C:\Users\David.Hwang\source\repos\Demo_01\04 - Database\Demo_01.Database\bin\Debug\Demo_01.Database.dll</div>
<div class="t" style="left:46.60px;top:349.00px;font-size:5.8px;color:#d4d4d4;letter-spacing:-0.35px;font-weight:bold;font-family:'Liberation Mono',monospace;">Demo_01.Database -&gt; C:\Users\David.Hwang\source\repos\Demo_01\04 - Database\Demo_01.Database\Demo_01.Database\bin\Debug\Demo_01.Database.dacpac</div>
<div class="t" style="left:21.60px;top:357.00px;font-size:5.8px;color:#d4d4d4;letter-spacing:-0.35px;font-weight:bold;font-family:'Liberation Mono',monospace;">========== Build: 1 succeeded or up-to-date, 0 failed, 0 skipped ==========</div>
<div class="a" style="left:595px;top:331px;width:12px;height:39px;background:#3e3e42;"></div>
<svg class="a" style="left:598px;top:334px;" width="6" height="4" viewBox="0 0 6 4"><path d="M0.5 3.5L3 0.5L5.5 3.5Z" fill="#999"/></svg>
<div class="a" style="left:597px;top:349px;width:8px;height:5px;background:#686868;"></div>
<div class="a" style="left:596px;top:354px;width:11px;height:2px;background:#c0c0c0;"></div>
<svg class="a" style="left:598px;top:364px;" width="6" height="4" viewBox="0 0 6 4"><path d="M0.5 0.5L3 3.5L5.5 0.5Z" fill="#999"/></svg>
<div class="a" style="left:15px;top:370px;width:592px;height:8px;background:#3e3e42;"></div>
<svg class="a" style="left:17px;top:371px;" width="4" height="6" viewBox="0 0 4 6"><path d="M3.5 0.5L0.5 3L3.5 5.5Z" fill="#999"/></svg>
<div class="a" style="left:24px;top:372px;width:131px;height:4px;background:#686868;"></div>
<svg class="a" style="left:589px;top:371px;" width="4" height="6" viewBox="0 0 4 6"><path d="M0.5 0.5L3.5 3L0.5 5.5Z" fill="#999"/></svg>
<div class="a" style="left:15px;top:378px;width:592px;height:13px;background:#2d2d30;"></div>
<div class="t" style="left:17.60px;top:382.00px;font-size:6.5px;color:#e2e2e2;letter-spacing:-0.25px;">Data Tools Operations</div>
<div class="t" style="left:80.60px;top:382.00px;font-size:6.5px;color:#e2e2e2;letter-spacing:-0.25px;">Error List</div>
<div class="a" style="left:106px;top:378px;width:25px;height:13px;background:#252526;"></div>
<div class="t" style="left:107.60px;top:382.00px;font-size:6.5px;color:#3399ff;letter-spacing:-0.2px;">Output</div>
<div class="a" style="left:0px;top:391px;width:750px;height:11px;background:#007acc;"></div>
<svg class="a" style="left:4px;top:393px;" width="8" height="7" viewBox="0 0 8 7"><path d="M1.5 0.5h6l-1 6h-6z" fill="none" stroke="#fff" stroke-width="0.9"/></svg>
<div class="t" style="left:13.60px;top:395.00px;font-size:6.6px;color:#ffffff;letter-spacing:-0.45px;">Ready</div>
<svg class="a" style="left:649px;top:393px;" width="6" height="7" viewBox="0 0 6 7"><path d="M3 7V1M0.5 3L3 0.5L5.5 3" fill="none" stroke="#fff" stroke-width="1"/></svg>
<div class="t" style="left:656.60px;top:395.00px;font-size:6.6px;color:#ffffff;letter-spacing:-0.3px;">Add to Source Control</div>
<svg class="a" style="left:718px;top:395px;" width="5" height="3" viewBox="0 0 5 3"><path d="M0 2.5h4.5l-2.25-2.5z" fill="#fff"/></svg>
<svg class="a" style="left:731px;top:392px;" width="10" height="10" viewBox="0 0 10 10"><path d="M2 6.5V4a2.5 2.5 0 0 1 5 0v2.5l1 1h-7z" fill="#e0e0e0"/><circle cx="7" cy="7.5" r="2.3" fill="#e51400"/><text x="7" y="9" font-size="3.6" text-anchor="middle" fill="#fff" font-family="Liberation Sans">2</text></svg>
<div class="a" style="left:221px;top:111px;width:309px;height:176px;background:#f0f0f0;box-shadow:0 0 0 1px rgba(0,0,0,0.2),0 1px 4px rgba(0,0,0,0.3)"></div>
<div class="a" style="left:221px;top:111px;width:309px;height:15px;background:#ffffff;"></div>
<div class="t" style="left:224.60px;top:117.00px;font-size:6.8px;color:#a0a0a0;letter-spacing:-0.2px;">Publish Database</div>
<div class="t" style="left:492.60px;top:117.00px;font-size:6.8px;color:#8a8a8a;letter-spacing:-0.2px;">?</div>
<svg class="a" style="left:514px;top:115px;" width="8" height="8" viewBox="0 0 8 8"><path d="M1 1L7 7M7 1L1 7" stroke="#5a5a5a" stroke-width="0.8"/></svg>
<div class="a" style="left:228px;top:137px;width:295px;height:105px;border:1px solid #dcdcdc;background:transparent;"></div>
<div class="a" style="left:230px;top:134px;width:56px;height:6px;background:#f0f0f0;"></div>
<div class="t" style="left:230.60px;top:135.00px;font-size:6.6px;color:#1e1e1e;letter-spacing:-0.2px;">Target Database Settings</div>
<div class="t" style="left:234.60px;top:150.00px;font-size:6.6px;color:#1e1e1e;letter-spacing:-0.2px;">Target database connection:</div>
<div class="a" style="left:233px;top:158px;width:255px;height:11px;border:1px solid #a0a0a0;background:#f0f0f0;"></div>
<div class="a" style="left:492px;top:156px;width:26px;height:14px;background:#cccccc;"></div>
<div class="t" style="left:496.60px;top:161.00px;font-size:6.6px;color:#b0b0b0;letter-spacing:-0.2px;">Clear</div>
<div class="t" style="left:234.60px;top:172.00px;font-size:6.6px;color:#1e1e1e;letter-spacing:-0.2px;">Database name:</div>
<div class="a" style="left:233px;top:180px;width:255px;height:11px;border:1px solid #7a7a7a;background:#ffffff;"></div>
<div class="t" style="left:234.60px;top:184.00px;font-size:6.6px;color:#1e1e1e;letter-spacing:-0.2px;">Demo_01</div>
<div class="t" style="left:234.60px;top:195.00px;font-size:6.6px;color:#1e1e1e;letter-spacing:-0.2px;">Publish script name:</div>
<div class="a" style="left:233px;top:203px;width:255px;height:11px;border:1px solid #7a7a7a;background:#ffffff;"></div>
<div class="t" style="left:234.60px;top:207.00px;font-size:6.6px;color:#1e1e1e;letter-spacing:-0.2px;">Demo_01.publish.sql</div>
<div class="a" style="left:236px;top:218px;width:6px;height:6px;border:1px solid #333;background:#ffffff;"></div>
<div class="t" style="left:243.60px;top:219.00px;font-size:6.6px;color:#1e1e1e;letter-spacing:-0.2px;">Register as a Data-tier Application</div>
<div class="a" style="left:244px;top:228px;width:6px;height:6px;border:1px solid #c8c8c8;background:#ffffff;"></div>
<div class="t" style="left:252.60px;top:229.00px;font-size:6.6px;color:#9a9a9a;letter-spacing:-0.2px;">Block publish when database has drifted</div>
<div class="a" style="left:470px;top:226px;width:48px;height:14px;border:1px solid #adadad;background:#e1e1e1;"></div>
<div class="t" style="left:487.60px;top:231.00px;font-size:6.6px;color:#1e1e1e;letter-spacing:-0.2px;">Advanced...</div>
<div class="a" style="left:229px;top:247px;width:60px;height:14px;border:1px solid #adadad;background:#e1e1e1;"></div>
<div class="t" style="left:231.60px;top:252.00px;font-size:6.6px;color:#1e1e1e;letter-spacing:-0.2px;">Load Profile...</div>
<div class="a" style="left:229px;top:265px;width:60px;height:14px;border:1px solid #adadad;background:#e1e1e1;"></div>
<div class="t" style="left:231.60px;top:270.00px;font-size:6.6px;color:#1e1e1e;letter-spacing:-0.2px;">Create Profile</div>
<div class="a" style="left:460px;top:265px;width:62px;height:13px;border:1px solid #adadad;background:#e1e1e1;"></div>
<div class="t" style="left:494.60px;top:270.00px;font-size:6.6px;color:#1e1e1e;letter-spacing:-0.2px;">Cancel</div>
<div class="a" style="left:256px;top:55px;width:238px;height:289px;background:#ffffff;box-shadow:0 0 0 1px rgba(0,0,0,0.25),0 1px 4px rgba(0,0,0,0.35)"></div>
<svg class="a" style="left:255px;top:55px;" width="16" height="14" viewBox="0 0 16 14"><g transform="translate(4.6 3) scale(0.78) translate(-4.9 -2.7)"><path d="M12.3 2.7L15.2 4V11.2L12.3 12.4L8.6 8.9L6.4 10.4L4.9 9.7V5.3L6.4 4.6L8.6 6.1Z M12.3 5.4L9.9 7.5L12.3 9.6Z M6.3 6.4V8.6L7.6 7.5Z" fill="#8a5fd0" fill-rule="evenodd"/></g></svg>
<div class="t" style="left:269.60px;top:60.00px;font-size:6.8px;color:#1e1e1e;letter-spacing:-0.55px;">Connect</div>
<svg class="a" style="left:482px;top:58px;" width="8" height="8" viewBox="0 0 8 8"><path d="M1 1L7 7M7 1L1 7" stroke="#555" stroke-width="0.9"/></svg>
<div class="t" style="left:269.60px;top:74.00px;font-size:6.8px;color:#717171;letter-spacing:-0.2px;">History</div>
<div class="t" style="left:301.60px;top:74.00px;font-size:6.8px;color:#1e1e1e;letter-spacing:-0.5px;font-weight:bold;">Browse</div>
<div class="a" style="left:301px;top:81px;width:22px;height:1.5px;background:#a9d4f7;"></div>
<div class="a" style="left:263px;top:87px;width:224px;height:1px;background:#a0a0a0;"></div>
<div class="a" style="left:266px;top:90px;width:221px;height:11px;border:1px solid #a0a0a0;background:#ffffff;"></div>
<svg class="a" style="left:268px;top:91px;" width="8" height="8" viewBox="0 0 8 8"><circle cx="4.8" cy="3" r="2" fill="none" stroke="#1e1e1e" stroke-width="1.1"/><path d="M3.4 4.4 L1 7" stroke="#1e1e1e" stroke-width="1.4"/></svg>
<div class="t" style="left:276.60px;top:94.00px;font-size:6.8px;color:#6d6d6d;letter-spacing:-0.35px;">Type here to filter the list</div>
<svg class="a" style="left:265px;top:105.3px;" width="4" height="5" viewBox="0 0 4 5"><path d="M0.5 0.5L3.5 2.5L0.5 4.5Z" fill="none" stroke="#333" stroke-width="0.8"/></svg>
<div class="t" style="left:271.60px;top:106.00px;font-size:6.8px;color:#1a3a80;letter-spacing:-0.2px;">Local</div>
<svg class="a" style="left:265px;top:113.8px;" width="4" height="5" viewBox="0 0 4 5"><path d="M0.5 0.5L3.5 2.5L0.5 4.5Z" fill="none" stroke="#333" stroke-width="0.8"/></svg>
<div class="t" style="left:271.60px;top:114.00px;font-size:6.8px;color:#1a3a80;letter-spacing:-0.2px;">Network</div>
<svg class="a" style="left:265px;top:122.9px;" width="4" height="5" viewBox="0 0 4 5"><path d="M0.5 0.5L3.5 2.5L0.5 4.5Z" fill="none" stroke="#333" stroke-width="0.8"/></svg>
<div class="t" style="left:271.60px;top:123.00px;font-size:6.8px;color:#1a3a80;letter-spacing:-0.2px;">Azure</div>
<div class="a" style="left:263px;top:217px;width:224px;height:1px;background:#a0a0a0;"></div>
<div class="t" style="left:271.60px;top:232.00px;font-size:6.6px;color:#2a2a2a;letter-spacing:-0.38px;">Server Name:</div>
<div class="t" style="left:271.60px;top:246.00px;font-size:6.6px;color:#2a2a2a;letter-spacing:-0.38px;">Authentication:</div>
<div class="t" style="left:271.60px;top:260.00px;font-size:6.6px;color:#2a2a2a;letter-spacing:-0.38px;">User Name:</div>
<div class="t" style="left:271.60px;top:274.00px;font-size:6.6px;color:#2a2a2a;letter-spacing:-0.38px;">Password:</div>
<div class="t" style="left:271.60px;top:299.00px;font-size:6.6px;color:#2a2a2a;letter-spacing:-0.38px;">Database Name:</div>
<div class="a" style="left:326px;top:229px;width:156px;height:12px;border:1px solid #7eb4ea;background:#ffffff;"></div>
<div class="t" style="left:328.60px;top:233.00px;font-size:6.6px;color:#1e1e1e;letter-spacing:-0.2px;">.</div>
<div class="a" style="left:326px;top:243px;width:156px;height:12px;border:1px solid #c8c8c8;background:#e5e5e5;"></div>
<div class="t" style="left:328.60px;top:246.00px;font-size:6.6px;color:#1e1e1e;letter-spacing:-0.2px;">Windows Authentication</div>
<svg class="a" style="left:474px;top:247px;" width="5" height="4" viewBox="0 0 5 4"><path d="M0.5 0.5L2.5 2.5L4.5 0.5" fill="none" stroke="#555" stroke-width="0.8"/></svg>
<div class="a" style="left:326px;top:257px;width:156px;height:12px;border:1px solid #c0c0c0;background:#ffffff;"></div>
<div class="t" style="left:326.60px;top:261.00px;font-size:6.6px;color:#1e1e1e;letter-spacing:-0.52px;">PERFICIENT\david.hwang</div>
<div class="a" style="left:326px;top:272px;width:156px;height:11px;background:#cccccc;"></div>
<div class="a" style="left:327px;top:286px;width:7px;height:7px;border:1px solid #d9d9d9;background:#e5e5e5;"></div>
<div class="t" style="left:335.60px;top:288.00px;font-size:6.6px;color:#333333;letter-spacing:-0.5px;">Remember Password</div>
<div class="a" style="left:326px;top:296px;width:156px;height:12px;border:1px solid #c0c0c0;background:#ffffff;"></div>
<div class="t" style="left:329.60px;top:300.00px;font-size:6.6px;color:#1e1e1e;letter-spacing:-0.2px;">&lt;default&gt;</div>
<svg class="a" style="left:474px;top:300px;" width="5" height="4" viewBox="0 0 5 4"><path d="M0.5 0.5L2.5 2.5L4.5 0.5" fill="none" stroke="#555" stroke-width="0.8"/></svg>
<div class="t" style="left:450.60px;top:313.00px;font-size:6.6px;color:#1c6cc0;letter-spacing:-0.4px;">Advanced...</div>
<div class="a" style="left:263px;top:324px;width:224px;height:1px;background:#a0a0a0;"></div>
<div class="a" style="left:265px;top:329px;width:49px;height:12px;border:1px solid #adadad;background:#e1e1e1;"></div>
<div class="t" style="left:267.60px;top:333.00px;font-size:6.6px;color:#1e1e1e;letter-spacing:-0.4px;">Test Connection</div>
<div class="a" style="left:405px;top:329px;width:38px;height:12px;border:1px solid #adadad;background:#e1e1e1;"></div>
<div class="t" style="left:419.60px;top:333.00px;font-size:6.6px;color:#1e1e1e;letter-spacing:-0.2px;">OK</div>
<div class="a" style="left:448px;top:329px;width:38px;height:12px;border:1px solid #adadad;background:#e1e1e1;"></div>
<div class="t" style="left:457.60px;top:333.00px;font-size:6.6px;color:#1e1e1e;letter-spacing:-0.3px;">Cancel</div>
</body></html>
